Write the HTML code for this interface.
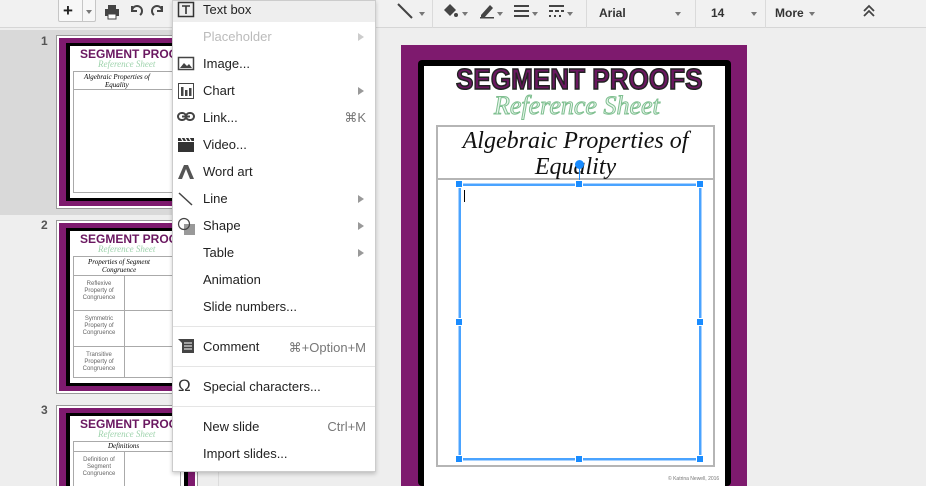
<!DOCTYPE html>
<html><head><style>
*{margin:0;padding:0;box-sizing:border-box}
html,body{width:926px;height:486px;overflow:hidden}
body{background:#eeeeee;font-family:"Liberation Sans",Arial,sans-serif;position:relative}
.abs{position:absolute}
.tb{position:absolute;left:0;top:0;width:926px;height:28px;background:#f1f1f1;border-bottom:1px solid #d6d6d6}
.tb span{position:absolute;top:6px;font-size:12px;color:#333;font-weight:bold}
.car{position:absolute;top:12px;width:0;height:0;border-left:3px solid transparent;border-right:3px solid transparent;border-top:4px solid #777}
.sep{position:absolute;top:0;width:1px;height:28px;background:#dadada}
.side{position:absolute;left:0;top:29px;width:219px;height:457px;background:#eeeeee;border-right:1px solid #dcdcdc;overflow:hidden}
.num{position:absolute;left:41px;font-size:12px;font-weight:bold;color:#555}
.th{position:absolute;left:57px;width:140px;height:172px;border:2px solid #fff;outline:1px solid #999;background:#7e1a6e;overflow:hidden}
.th .b{position:absolute;left:7px;top:5px;right:7px;bottom:5px;background:#000}
.th .w{position:absolute;left:11px;top:8px;right:11px;bottom:8px;background:#fff}
.th .t1{position:absolute;left:10px;top:1px;font:bold 12px "Liberation Sans",sans-serif;color:#6a1760;white-space:nowrap}
.th .t2{position:absolute;left:28px;top:13px;font:italic 9px "Liberation Serif",serif;color:#9fd3ad;white-space:nowrap}
.menu{position:absolute;left:172px;top:0;width:204px;height:472px;background:#fff;border:1px solid #ccc;box-shadow:0 2px 4px rgba(0,0,0,.2)}
.it{position:absolute;left:30px;font-size:13px;color:#222;white-space:nowrap}
.sc{position:absolute;right:9px;font-size:13px;color:#777}
.ar{position:absolute;right:11px;width:0;height:0;border-top:4px solid transparent;border-bottom:4px solid transparent;border-left:6px solid #999}
.ms{position:absolute;left:0;width:202px;height:1px;background:#e5e5e5}
.ic{position:absolute;left:4px}
.h{position:absolute;width:8px;height:8px;background:#1a8cff;border:1px solid #fff}
</style></head><body>
<div class="tb">
 <div class="abs" style="left:58px;top:0;width:38px;height:22px;border:1px solid #c6c6c6;border-top:none;border-radius:0 0 2px 2px;background:#f7f7f7"></div>
 <div class="abs" style="left:82px;top:0;width:1px;height:22px;background:#c6c6c6"></div>
 <span style="left:63px;top:1px;font-size:17px;color:#222">+</span>
 <div class="car" style="left:86px;top:10px"></div>
 <svg class="abs" style="left:104px;top:3px" width="70" height="18"><rect x="1" y="6" width="14" height="7" fill="#444"/><rect x="4" y="2" width="8" height="4" fill="#444"/><rect x="4" y="11" width="8" height="5" fill="#fff" stroke="#444"/><path d="M28 8a5 5 0 1 1 8 4M28 3v5h5" stroke="#444" stroke-width="2" fill="none"/><path d="M58 8a5 5 0 1 0 -8 4M58 3v5h-5" stroke="#444" stroke-width="2" fill="none"/></svg>
 <svg class="abs" style="left:396px;top:2px" width="20" height="18"><path d="M2 2L16 16" stroke="#444" stroke-width="2"/></svg>
 <div class="car" style="left:419px"></div>
 <div class="sep" style="left:432px"></div>
 <svg class="abs" style="left:441px;top:2px" width="18" height="18"><path d="M3 8l6-6 6 6-6 6z" fill="#444"/><circle cx="15" cy="13" r="2" fill="#444"/></svg>
 <div class="car" style="left:462px"></div>
 <svg class="abs" style="left:478px;top:2px" width="18" height="18"><path d="M3 13l9-10 3 3-9 10H3z" fill="#444"/><rect x="2" y="15" width="14" height="1.5" fill="#444"/></svg>
 <div class="car" style="left:497px"></div>
 <svg class="abs" style="left:514px;top:4px" width="16" height="14"><rect x="0" y="1" width="15" height="2" fill="#444"/><rect x="0" y="6" width="15" height="2" fill="#444"/><rect x="0" y="11" width="15" height="2" fill="#444"/></svg>
 <div class="car" style="left:532px"></div>
 <svg class="abs" style="left:549px;top:4px" width="16" height="14"><rect x="0" y="1" width="15" height="2" fill="#444"/><rect x="0" y="6" width="4" height="2" fill="#444"/><rect x="6" y="6" width="4" height="2" fill="#444"/><rect x="12" y="6" width="3" height="2" fill="#444"/><rect x="0" y="11" width="2" height="2" fill="#444"/><rect x="5" y="11" width="2" height="2" fill="#444"/><rect x="10" y="11" width="2" height="2" fill="#444"/></svg>
 <div class="car" style="left:567px"></div>
 <div class="sep" style="left:586px"></div>
 <span style="left:599px">Arial</span>
 <div class="car" style="left:675px"></div>
 <div class="sep" style="left:695px"></div>
 <span style="left:711px">14</span>
 <div class="car" style="left:751px"></div>
 <div class="sep" style="left:765px"></div>
 <span style="left:775px">More</span>
 <div class="car" style="left:809px"></div>
 <svg class="abs" style="left:862px;top:4px" width="14" height="14"><path d="M2 7l5-5 5 5M2 12l5-5 5 5" stroke="#444" stroke-width="1.8" fill="none"/></svg>
</div>

<div class="side">
 <div class="abs" style="left:0;top:1px;width:218px;height:185px;background:#d9d9d9"></div>
 <div class="num" style="top:5px">1</div>
 <div class="th" style="top:7px"><div class="b"></div><div class="w"></div>
  <div class="abs" style="left:11px;top:8px;right:11px;bottom:8px">
   <div class="t1">SEGMENT PROOFS</div><div class="t2">Reference Sheet</div>
   <div class="abs" style="left:3px;top:25px;right:3px;bottom:5px;border:1px solid #aaa"></div>
   <div class="abs" style="left:3px;top:43px;right:3px;height:1px;background:#aaa"></div>
   <div class="abs" style="left:14px;top:27px;font:italic 7px 'Liberation Serif',serif;white-space:nowrap;line-height:8px">Algebraic Properties of<br>&nbsp;&nbsp;&nbsp;&nbsp;&nbsp;&nbsp;&nbsp;&nbsp;&nbsp;&nbsp;&nbsp;&nbsp;Equality</div>
  </div></div>
 <div class="num" style="top:189px">2</div>
 <div class="th" style="top:192px"><div class="b"></div><div class="w"></div>
  <div class="abs" style="left:11px;top:8px;right:11px;bottom:8px">
   <div class="t1">SEGMENT PROOFS</div><div class="t2">Reference Sheet</div>
   <div class="abs" style="left:3px;top:25px;right:3px;bottom:5px;border:1px solid #aaa"></div>
   <div class="abs" style="left:3px;top:44px;right:3px;height:1px;background:#aaa"></div>
   <div class="abs" style="left:3px;top:79px;right:3px;height:1px;background:#aaa"></div>
   <div class="abs" style="left:3px;top:115px;right:3px;height:1px;background:#aaa"></div>
   <div class="abs" style="left:54px;top:44px;width:1px;bottom:5px;background:#aaa"></div>
   <div class="abs" style="left:18px;top:27px;font:italic 7px/8px 'Liberation Serif',serif;white-space:nowrap">Properties of Segment<br>&nbsp;&nbsp;&nbsp;&nbsp;&nbsp;&nbsp;&nbsp;&nbsp;Congruence</div>
   <div class="abs" style="left:5px;top:50px;width:48px;font-size:6px;color:#666;line-height:7px;text-align:center">Reflexive<br>Property of<br>Congruence</div>
   <div class="abs" style="left:5px;top:85px;width:48px;font-size:6px;color:#666;line-height:7px;text-align:center">Symmetric<br>Property of<br>Congruence</div>
   <div class="abs" style="left:5px;top:121px;width:48px;font-size:6px;color:#666;line-height:7px;text-align:center">Transitive<br>Property of<br>Congruence</div>
  </div></div>
 <div class="num" style="top:374px">3</div>
 <div class="th" style="top:377px"><div class="b"></div><div class="w"></div>
  <div class="abs" style="left:11px;top:8px;right:11px;bottom:8px">
   <div class="t1">SEGMENT PROOFS</div><div class="t2">Reference Sheet</div>
   <div class="abs" style="left:3px;top:25px;right:3px;bottom:5px;border:1px solid #aaa"></div>
   <div class="abs" style="left:3px;top:35px;right:3px;height:1px;background:#aaa"></div>
   <div class="abs" style="left:54px;top:35px;width:1px;bottom:5px;background:#aaa"></div>
   <div class="abs" style="left:38px;top:26px;font:italic 7px 'Liberation Serif',serif">Definitions</div>
   <div class="abs" style="left:5px;top:41px;width:48px;font-size:6px;color:#666;line-height:7px;text-align:center">Definition of<br>Segment<br>Congruence</div>
  </div></div>
</div>

<div class="abs" style="left:401px;top:45px;width:346px;height:441px;background:#7e1a6e"></div>
<div class="abs" style="left:418px;top:60px;width:313px;height:426px;background:#000;border-radius:4px"></div>
<div class="abs" style="left:424px;top:66px;width:301px;height:420px;background:#fff"></div>
<div class="abs" style="left:456px;top:64px;font:bold 29px 'Liberation Sans',sans-serif;color:#6a1760;white-space:nowrap;-webkit-text-stroke:1.5px #222;transform:scaleX(.9);transform-origin:left">SEGMENT PROOFS</div>
<div class="abs" style="left:494px;top:91px;font:italic 26px 'Liberation Serif',serif;color:#e8f6ec;-webkit-text-stroke:1px #7fbf90;white-space:nowrap">Reference Sheet</div>
<div class="abs" style="left:436px;top:125px;width:279px;height:342px;border:2px solid #b5b5b5"></div>
<div class="abs" style="left:436px;top:178px;width:279px;height:2px;background:#b5b5b5"></div>
<div class="abs" style="left:438px;top:128px;width:275px;text-align:center;font:italic 24px/26px 'Liberation Serif',serif;color:#111">Algebraic Properties of<br>Equality</div>
<div class="abs" style="left:459px;top:184px;width:242px;height:276px;border:2px solid #4aa3ff;outline:1px solid #a8d2ff"></div>
<div class="abs" style="left:579px;top:165px;width:1px;height:20px;background:#1a8cff"></div>
<div class="abs" style="left:575px;top:160px;width:9px;height:9px;border-radius:50%;background:#1a8cff"></div>
<div class="abs" style="left:464px;top:190px;width:1px;height:12px;background:#000"></div>
<div class="h" style="left:455px;top:180px"></div><div class="h" style="left:575px;top:180px"></div><div class="h" style="left:696px;top:180px"></div>
<div class="h" style="left:455px;top:318px"></div><div class="h" style="left:696px;top:318px"></div>
<div class="h" style="left:455px;top:455px"></div><div class="h" style="left:575px;top:455px"></div><div class="h" style="left:696px;top:455px"></div>
<div class="abs" style="left:668px;top:476px;font-size:5px;color:#777">© Katrina Newell, 2016</div>

<div class="menu">
 <div class="abs" style="left:0;top:0;width:202px;height:21px;background:#eeeeee"></div>
 <svg class="ic" style="top:0" width="20" height="18"><rect x="1.5" y="1.5" width="15" height="14" fill="none" stroke="#333" stroke-width="1.5"/><path d="M5 5h8M9 5v8" stroke="#333" stroke-width="1.6"/></svg>
 <div class="it" style="top:1px">Text box</div>
 <div class="it" style="top:28px;color:#bbb">Placeholder</div><div class="ar" style="top:32px;border-left-color:#ccc"></div>
 <svg class="ic" style="top:55px" width="20" height="16"><rect x="1.5" y="1.5" width="15" height="12" fill="none" stroke="#444" stroke-width="1.5"/><path d="M3 12l4-5 3 3 2-2 3 4z" fill="#444"/></svg>
 <div class="it" style="top:55px">Image...</div>
 <svg class="ic" style="top:81px" width="20" height="18"><rect x="1.5" y="1.5" width="15" height="15" fill="none" stroke="#444" stroke-width="1"/><rect x="4" y="5" width="2.5" height="9" fill="#444"/><rect x="8" y="8" width="2.5" height="6" fill="#444"/><rect x="12" y="6" width="2.5" height="8" fill="#444"/></svg>
 <div class="it" style="top:82px">Chart</div><div class="ar" style="top:86px"></div>
 <svg class="ic" style="top:110px" width="20" height="12"><rect x="1" y="2" width="8" height="7" rx="3.5" fill="none" stroke="#444" stroke-width="2"/><rect x="9" y="2" width="8" height="7" rx="3.5" fill="none" stroke="#444" stroke-width="2"/><path d="M5 5.5h8" stroke="#444" stroke-width="2"/></svg>
 <div class="it" style="top:109px">Link...</div><div class="sc" style="top:109px">⌘K</div>
 <svg class="ic" style="top:136px" width="20" height="16"><rect x="1" y="5" width="16" height="10" fill="#333"/><path d="M1 1h16v3H1z" fill="#333"/><path d="M4 1l2 3M8 1l2 3M12 1l2 3" stroke="#fff" stroke-width="1.2"/></svg>
 <div class="it" style="top:136px">Video...</div>
 <svg class="ic" style="top:163px" width="20" height="16"><path d="M1 15L7 1h4l6 14h-4l-4-10-4 10z" fill="#555"/></svg>
 <div class="it" style="top:163px">Word art</div>
 <svg class="ic" style="top:190px" width="20" height="16"><path d="M2 2l13 12" stroke="#444" stroke-width="1.5"/></svg>
 <div class="it" style="top:190px">Line</div><div class="ar" style="top:194px"></div>
 <svg class="ic" style="top:216px" width="20" height="20"><rect x="7" y="7" width="11" height="11" fill="#999"/><circle cx="7" cy="7" r="5.5" fill="none" stroke="#444" stroke-width="1.2"/></svg>
 <div class="it" style="top:217px">Shape</div><div class="ar" style="top:221px"></div>
 <div class="it" style="top:244px">Table</div><div class="ar" style="top:248px"></div>
 <div class="it" style="top:271px">Animation</div>
 <div class="it" style="top:298px">Slide numbers...</div>
 <div class="ms" style="top:325px"></div>
 <svg class="ic" style="top:337px" width="20" height="16"><path d="M1 1h16v14H5V5z" fill="#444"/><path d="M7 5h8M7 8h8M7 11h8" stroke="#fff" stroke-width="1"/></svg>
 <div class="it" style="top:338px">Comment</div><div class="sc" style="top:339px">⌘+Option+M</div>
 <div class="ms" style="top:365px"></div>
 <div class="ic" style="top:375px;font-size:17px;color:#333;left:5px">Ω</div>
 <div class="it" style="top:378px">Special characters...</div>
 <div class="ms" style="top:405px"></div>
 <div class="it" style="top:418px">New slide</div><div class="sc" style="top:418px">Ctrl+M</div>
 <div class="it" style="top:445px">Import slides...</div>
</div>
</body></html>
